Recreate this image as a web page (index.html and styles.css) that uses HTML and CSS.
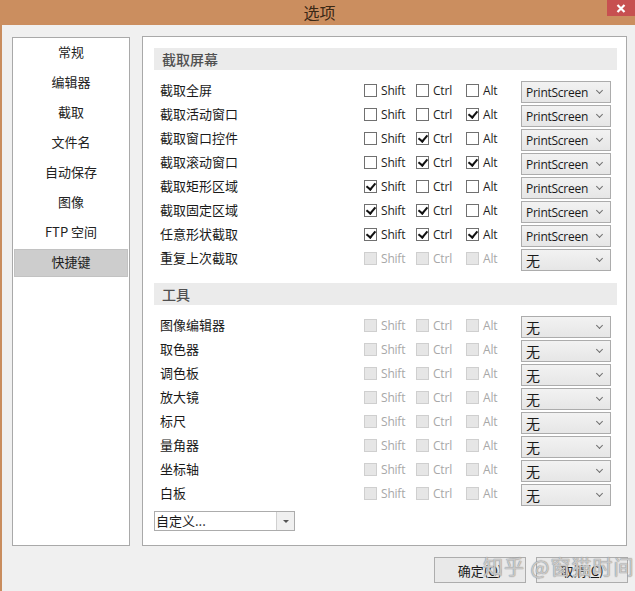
FILE: index.html
```html
<!DOCTYPE html>
<html lang="zh">
<head>
<meta charset="utf-8">
<title>选项</title>
<link rel="stylesheet" href="styles.css">
</head>
<body>
<div class="window">
  <div class="titlebar">
    <span class="title">选项</span>
    <div class="close"><svg width="10" height="9" viewBox="0 0 10 9"><path d="M1.5 1 L8.5 8 M8.5 1 L1.5 8" stroke="#fff" stroke-width="2.2" fill="none"/></svg></div>
  </div>
  <div class="content">
    <div class="sidebar">
      <div class="nav-item">常规</div>
      <div class="nav-item">编辑器</div>
      <div class="nav-item">截取</div>
      <div class="nav-item">文件名</div>
      <div class="nav-item">自动保存</div>
      <div class="nav-item">图像</div>
      <div class="nav-item">FTP 空间</div>
      <div class="nav-item selected">快捷键</div>
    </div>
    <div class="panel">
      <div class="section-head">截取屏幕</div>
      <div class="rows">
        <div class="row"><span class="label">截取全屏</span>
          <span class="chk"><i class="box"></i><span class="t">Shift</span></span><span class="chk"><i class="box"></i><span class="t">Ctrl</span></span><span class="chk"><i class="box"></i><span class="t">Alt</span></span>
          <span class="select">PrintScreen<i class="chev"></i></span></div>
        <div class="row"><span class="label">截取活动窗口</span>
          <span class="chk"><i class="box"></i><span class="t">Shift</span></span><span class="chk"><i class="box"></i><span class="t">Ctrl</span></span><span class="chk on"><i class="box"></i><span class="t">Alt</span></span>
          <span class="select">PrintScreen<i class="chev"></i></span></div>
        <div class="row"><span class="label">截取窗口控件</span>
          <span class="chk"><i class="box"></i><span class="t">Shift</span></span><span class="chk on"><i class="box"></i><span class="t">Ctrl</span></span><span class="chk"><i class="box"></i><span class="t">Alt</span></span>
          <span class="select">PrintScreen<i class="chev"></i></span></div>
        <div class="row"><span class="label">截取滚动窗口</span>
          <span class="chk"><i class="box"></i><span class="t">Shift</span></span><span class="chk on"><i class="box"></i><span class="t">Ctrl</span></span><span class="chk on"><i class="box"></i><span class="t">Alt</span></span>
          <span class="select">PrintScreen<i class="chev"></i></span></div>
        <div class="row"><span class="label">截取矩形区域</span>
          <span class="chk on"><i class="box"></i><span class="t">Shift</span></span><span class="chk"><i class="box"></i><span class="t">Ctrl</span></span><span class="chk"><i class="box"></i><span class="t">Alt</span></span>
          <span class="select">PrintScreen<i class="chev"></i></span></div>
        <div class="row"><span class="label">截取固定区域</span>
          <span class="chk on"><i class="box"></i><span class="t">Shift</span></span><span class="chk on"><i class="box"></i><span class="t">Ctrl</span></span><span class="chk"><i class="box"></i><span class="t">Alt</span></span>
          <span class="select">PrintScreen<i class="chev"></i></span></div>
        <div class="row"><span class="label">任意形状截取</span>
          <span class="chk on"><i class="box"></i><span class="t">Shift</span></span><span class="chk on"><i class="box"></i><span class="t">Ctrl</span></span><span class="chk on"><i class="box"></i><span class="t">Alt</span></span>
          <span class="select">PrintScreen<i class="chev"></i></span></div>
        <div class="row"><span class="label">重复上次截取</span>
          <span class="chk off"><i class="box"></i><span class="t">Shift</span></span><span class="chk off"><i class="box"></i><span class="t">Ctrl</span></span><span class="chk off"><i class="box"></i><span class="t">Alt</span></span>
          <span class="select cn">无<i class="chev"></i></span></div>
      </div>
      <div class="section-head second">工具</div>
      <div class="rows">
        <div class="row"><span class="label">图像编辑器</span>
          <span class="chk off"><i class="box"></i><span class="t">Shift</span></span><span class="chk off"><i class="box"></i><span class="t">Ctrl</span></span><span class="chk off"><i class="box"></i><span class="t">Alt</span></span>
          <span class="select cn">无<i class="chev"></i></span></div>
        <div class="row"><span class="label">取色器</span>
          <span class="chk off"><i class="box"></i><span class="t">Shift</span></span><span class="chk off"><i class="box"></i><span class="t">Ctrl</span></span><span class="chk off"><i class="box"></i><span class="t">Alt</span></span>
          <span class="select cn">无<i class="chev"></i></span></div>
        <div class="row"><span class="label">调色板</span>
          <span class="chk off"><i class="box"></i><span class="t">Shift</span></span><span class="chk off"><i class="box"></i><span class="t">Ctrl</span></span><span class="chk off"><i class="box"></i><span class="t">Alt</span></span>
          <span class="select cn">无<i class="chev"></i></span></div>
        <div class="row"><span class="label">放大镜</span>
          <span class="chk off"><i class="box"></i><span class="t">Shift</span></span><span class="chk off"><i class="box"></i><span class="t">Ctrl</span></span><span class="chk off"><i class="box"></i><span class="t">Alt</span></span>
          <span class="select cn">无<i class="chev"></i></span></div>
        <div class="row"><span class="label">标尺</span>
          <span class="chk off"><i class="box"></i><span class="t">Shift</span></span><span class="chk off"><i class="box"></i><span class="t">Ctrl</span></span><span class="chk off"><i class="box"></i><span class="t">Alt</span></span>
          <span class="select cn">无<i class="chev"></i></span></div>
        <div class="row"><span class="label">量角器</span>
          <span class="chk off"><i class="box"></i><span class="t">Shift</span></span><span class="chk off"><i class="box"></i><span class="t">Ctrl</span></span><span class="chk off"><i class="box"></i><span class="t">Alt</span></span>
          <span class="select cn">无<i class="chev"></i></span></div>
        <div class="row"><span class="label">坐标轴</span>
          <span class="chk off"><i class="box"></i><span class="t">Shift</span></span><span class="chk off"><i class="box"></i><span class="t">Ctrl</span></span><span class="chk off"><i class="box"></i><span class="t">Alt</span></span>
          <span class="select cn">无<i class="chev"></i></span></div>
        <div class="row"><span class="label">白板</span>
          <span class="chk off"><i class="box"></i><span class="t">Shift</span></span><span class="chk off"><i class="box"></i><span class="t">Ctrl</span></span><span class="chk off"><i class="box"></i><span class="t">Alt</span></span>
          <span class="select cn">无<i class="chev"></i></span></div>
      </div>
      <div class="combo"><span class="combo-text">自定义...</span><span class="combo-btn"><i class="tri"></i></span></div>
    </div>
  </div>
  <div class="footer">
    <button class="btn">确定(<u>O</u>)</button>
    <button class="btn">取消(<u>C</u>)</button>
  </div>
  <div class="watermark">知乎 @窗猫时间</div>
</div>
</body>
</html>
```
FILE: styles.css
```css
* { box-sizing: border-box; }
html, body { margin: 0; padding: 0; }
body {
  width: 635px;
  height: 591px;
  overflow: hidden;
  background: #f0f0f0;
  font-family: "Noto Sans CJK SC", "Noto Sans", sans-serif;
  color: #1a1a1a;
}
.window {
  position: relative;
  width: 635px;
  height: 591px;
  border-left: 2px solid #c98d5e;
  background: #f0f0f0;
}
.titlebar {
  position: relative;
  height: 25px;
  margin-left: -2px;
  background: #cb8e5f;
  display: flex;
  align-items: center;
  justify-content: center;
}
.title {
  font-size: 16px;
  color: #3a2816;
  line-height: 25px;
  margin-left: 4px;
}
.close {
  position: absolute;
  right: 0;
  top: 0;
  width: 28px;
  height: 16px;
  background: #c75050;
  display: flex;
  align-items: center;
  justify-content: center;
}
.close svg { display: block; }
.content {
  display: flex;
  gap: 12px;
  padding: 11px 0 0 10px;
  height: 521px;
}
.sidebar {
  width: 118px;
  height: 509px;
  margin-top: 1px;
  background: #fff;
  border: 1px solid #a9a9a9;
  padding: 0 1px;
}
.nav-item {
  height: 28px;
  margin: 1px 0 2px;
  font-size: 13px;
  line-height: 26px;
  text-align: center;
  color: #222;
}
.nav-item.selected {
  background: #cdcdcd;
  border: 1px solid #c2c2c2;
  line-height: 24px;
}
.panel {
  width: 485px;
  height: 510px;
  background: #fff;
  border: 1px solid #a9a9a9;
  padding: 11px 9px 0 11px;
}
.section-head {
  height: 22px;
  background: #ebebeb;
  padding-left: 8px;
  font-size: 14px;
  line-height: 22px;
  color: #505050;
  font-weight: 500;
}
.section-head.second { margin-top: 12px; }
.rows {
  margin-top: 11px;
  display: flex;
  flex-direction: column;
  gap: 2px;
}
.row {
  display: grid;
  grid-template-columns: 204px 52px 50px 55px 90px;
  align-items: center;
  height: 22px;
  padding-left: 6px;
}
.label {
  font-size: 13px;
  color: #1a1a1a;
  line-height: 22px;
  position: relative;
  top: -2px;
}
.chk {
  display: flex;
  align-items: center;
  gap: 4px;
  font-family: "Open Sans", "Noto Sans", sans-serif;
  font-size: 12px;
  letter-spacing: -0.2px;
  line-height: 16px;
  color: #1e1e1e;
  position: relative;
  top: -2px;
}
.chk .t {
  position: relative;
  top: 1px;
}
.box {
  display: block;
  flex: none;
  width: 13px;
  height: 13px;
  border: 1px solid #707070;
  background: #fff;
  position: relative;
}
.chk.on .box::after {
  content: "";
  position: absolute;
  left: 3px;
  top: 0px;
  width: 4px;
  height: 7px;
  border-right: 2px solid #111;
  border-bottom: 2px solid #111;
  transform: rotate(40deg);
}
.chk.off { color: #a8a8a8; }
.chk.off .box {
  background: #e6e6e6;
  border-color: #cfcfcf;
}
.select {
  position: relative;
  height: 22px;
  width: 90px;
  border: 1px solid #acacac;
  background: linear-gradient(#f2f2f2, #e6e6e6);
  font-family: "Open Sans", "Noto Sans", sans-serif;
  font-size: 12px;
  letter-spacing: -0.25px;
  line-height: 21px;
  padding-left: 4px;
  color: #1a1a1a;
}
.select.cn {
  font-family: "Noto Sans CJK SC", sans-serif;
  font-size: 14px;
  letter-spacing: 0;
  line-height: 20px;
}
.chev {
  position: absolute;
  right: 8px;
  top: 6px;
  width: 5px;
  height: 5px;
  border-right: 1.5px solid #707070;
  border-bottom: 1.5px solid #707070;
  transform: rotate(45deg);
}
.combo {
  margin-top: 5px;
  width: 141px;
  height: 20px;
  border: 1px solid #acacac;
  background: #fff;
  display: flex;
}
.combo-text {
  flex: 1;
  font-size: 13px;
  line-height: 18px;
  padding-left: 1px;
  color: #1a1a1a;
}
.combo-btn {
  width: 18px;
  border-left: 1px solid #d0d0d0;
  background: #f0f0f0;
  display: flex;
  align-items: center;
  justify-content: center;
}
.tri {
  width: 0;
  height: 0;
  border-left: 3px solid transparent;
  border-right: 3px solid transparent;
  border-top: 3px solid #555;
}
.footer {
  display: flex;
  justify-content: flex-end;
  gap: 10px;
  padding: 11px 7px 0 0;
}
.btn {
  width: 92px;
  height: 26px;
  border: 1px solid #adadad;
  background: #e9e9e9;
  font-family: "Noto Sans CJK SC", sans-serif;
  font-size: 13px;
  color: #1a1a1a;
  padding: 0;
}
.btn u { text-decoration: underline; }
.watermark {
  position: absolute;
  left: 481px;
  top: 552px;
  font-size: 20px;
  color: rgba(255, 255, 255, 0.55);
  text-shadow: 0 0 1px #8a8a8a, 0 0 1px #8a8a8a;
  letter-spacing: 1px;
  white-space: nowrap;
  pointer-events: none;
}
```
